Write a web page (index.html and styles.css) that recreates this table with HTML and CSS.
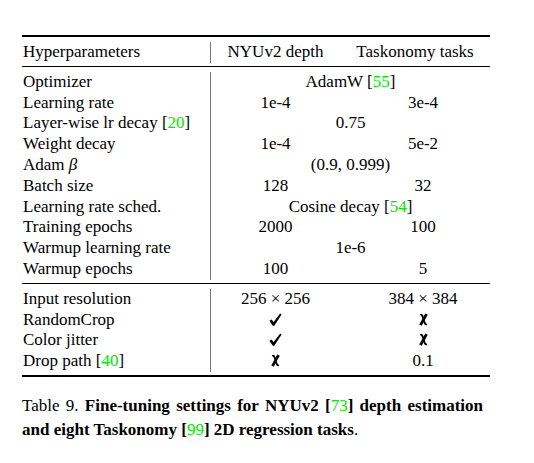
FILE: index.html
```html
<!DOCTYPE html>
<html lang="en">
<head>
    <meta charset="UTF-8">
    <title>Table 9</title>
    <link rel="stylesheet" href="styles.css">
</head>
<body>

    <div class="table">
        <!-- header -->
        <div class="group head">
            <div class="row">
                <div class="name">Hyperparameters</div>
                <div class="nyu">NYUv2 depth</div>
                <div class="tasko head-cell">Taskonomy tasks</div>
            </div>
        </div>

        <!-- optimisation settings -->
        <div class="group">
            <div class="row">
                <div class="name">Optimizer</div>
                <div class="both">AdamW [<span class="cite">55</span>]</div>
            </div>
            <div class="row">
                <div class="name">Learning rate</div>
                <div class="nyu">1e-4</div>
                <div class="tasko">3e-4</div>
            </div>
            <div class="row">
                <div class="name">Layer-wise lr decay [<span class="cite">20</span>]</div>
                <div class="both">0.75</div>
            </div>
            <div class="row">
                <div class="name">Weight decay</div>
                <div class="nyu">1e-4</div>
                <div class="tasko">5e-2</div>
            </div>
            <div class="row">
                <div class="name">Adam <i>β</i></div>
                <div class="both">(0.9, 0.999)</div>
            </div>
            <div class="row">
                <div class="name">Batch size</div>
                <div class="nyu">128</div>
                <div class="tasko">32</div>
            </div>
            <div class="row">
                <div class="name">Learning rate sched.</div>
                <div class="both">Cosine decay [<span class="cite">54</span>]</div>
            </div>
            <div class="row">
                <div class="name">Training epochs</div>
                <div class="nyu">2000</div>
                <div class="tasko">100</div>
            </div>
            <div class="row">
                <div class="name">Warmup learning rate</div>
                <div class="both">1e-6</div>
            </div>
            <div class="row">
                <div class="name">Warmup epochs</div>
                <div class="nyu">100</div>
                <div class="tasko">5</div>
            </div>
        </div>

        <!-- data settings -->
        <div class="group">
            <div class="row">
                <div class="name">Input resolution</div>
                <div class="nyu">256 × 256</div>
                <div class="tasko">384 × 384</div>
            </div>
            <div class="row">
                <div class="name">RandomCrop</div>
                <div class="nyu"><svg class="mark" viewBox="0 0 12 12"><path d="M0.4 7.2 L2.4 5.9 L4.3 8.4 L10.3 0.4 L11.6 1.3 L4.9 11.7 L3.5 11.7 Z"/></svg></div>
                <div class="tasko"><svg class="mark" viewBox="0 0 12 12"><path class="x1" d="M8.8 1 L3.2 11.2"/><path class="x2" d="M3 1.8 C4.8 0.8 5.6 4 6.2 6.2 C6.8 8.6 7.4 11 9.2 10.4"/></svg></div>
            </div>
            <div class="row">
                <div class="name">Color jitter</div>
                <div class="nyu"><svg class="mark" viewBox="0 0 12 12"><path d="M0.4 7.2 L2.4 5.9 L4.3 8.4 L10.3 0.4 L11.6 1.3 L4.9 11.7 L3.5 11.7 Z"/></svg></div>
                <div class="tasko"><svg class="mark" viewBox="0 0 12 12"><path class="x1" d="M8.8 1 L3.2 11.2"/><path class="x2" d="M3 1.8 C4.8 0.8 5.6 4 6.2 6.2 C6.8 8.6 7.4 11 9.2 10.4"/></svg></div>
            </div>
            <div class="row">
                <div class="name">Drop path [<span class="cite">40</span>]</div>
                <div class="nyu"><svg class="mark" viewBox="0 0 12 12"><path class="x1" d="M8.8 1 L3.2 11.2"/><path class="x2" d="M3 1.8 C4.8 0.8 5.6 4 6.2 6.2 C6.8 8.6 7.4 11 9.2 10.4"/></svg></div>
                <div class="tasko">0.1</div>
            </div>
        </div>
    </div>

    <p class="caption"><span class="label">Table 9.</span> <span>Fine-tuning settings for NYUv2 [</span><span class="cite">73</span><span>] depth estimation</span> <span>and eight Taskonomy [</span><span class="cite">99</span><span>] 2D regression tasks</span><span class="label">.</span></p>

</body>
</html>
```

FILE: styles.css
```css
body {
    font-family: "Liberation Serif", "Times New Roman", serif;
    font-size: 17px;
    color: #000;
    background-color: #fff;
    margin: 0;
    padding: 0;
}

/* The booktabs style table */
.table {
    width: 468px;
    margin: 35px 0 0 22px;
    border-top: 2px solid #000;
    border-bottom: 2px solid #000;
}

.group {
    padding: 5px 0 3px;
}

.group + .group {
    border-top: 1px solid #000;
}

.row {
    display: grid;
    grid-template-columns: 188px 130px 150px;
    height: 20.8px;
    line-height: 20.8px;
    white-space: nowrap;
}

.name {
    padding-left: 1px;
}

.nyu,
.both {
    border-left: 1px solid #777;
    text-align: center;
}

.both {
    grid-column: 2 / 4;
}

.tasko {
    text-align: center;
    padding-left: 16px;
}

.tasko.head-cell {
    padding-left: 0;
}

.cite {
    color: #00e600;
}

/* Check and cross marks */
.mark {
    width: 13px;
    height: 13px;
    vertical-align: -1px;
}

.mark path {
    fill: #000;
}

.mark .x1 {
    fill: none;
    stroke: #000;
    stroke-width: 2.6;
}

.mark .x2 {
    fill: none;
    stroke: #000;
    stroke-width: 1.7;
}

/* Caption under the table */
.caption {
    width: 461px;
    margin: 17px 0 0 22px;
    line-height: 24px;
    text-align: justify;
    font-weight: bold;
}

.caption .label {
    font-weight: normal;
}

.caption .cite {
    font-weight: normal;
}
```
